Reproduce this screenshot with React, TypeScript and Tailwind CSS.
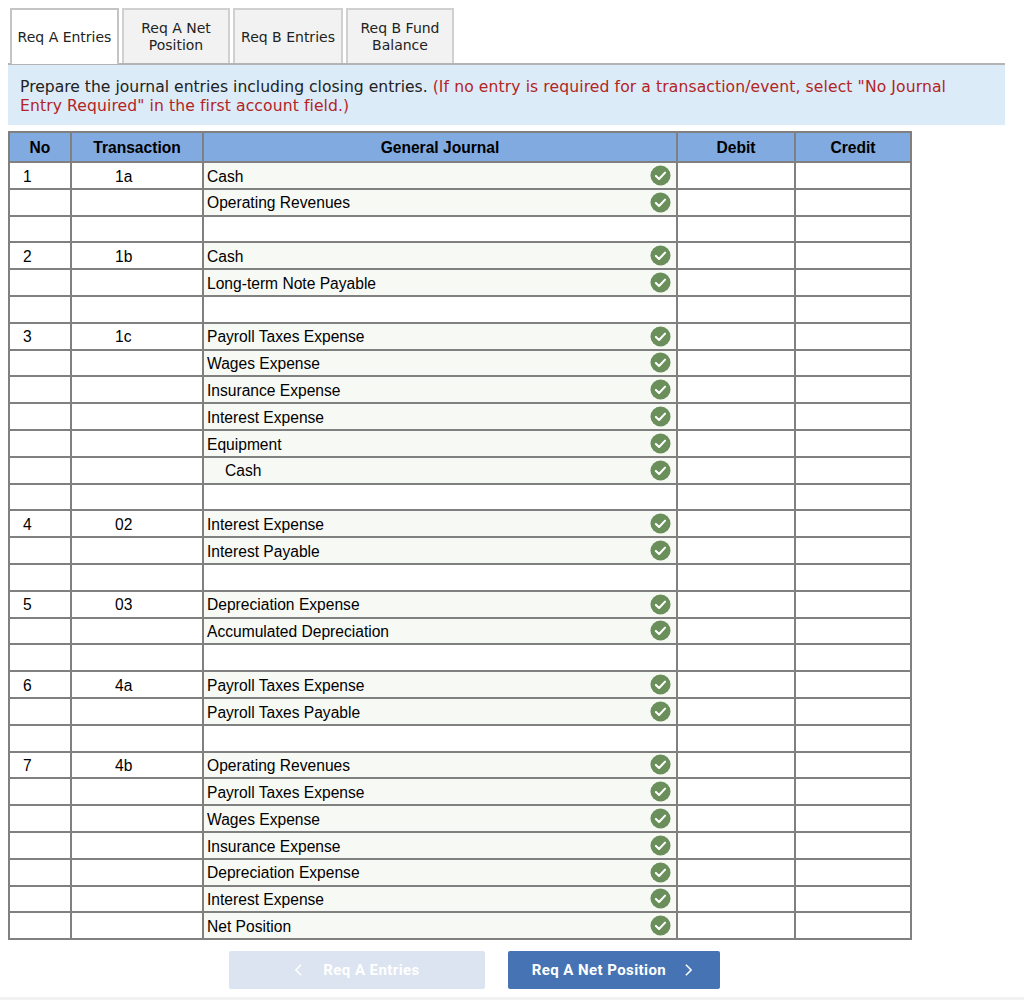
import React from "react";

type Row = { no?: string; tx?: string; acct?: string; indent?: boolean };

const groups: [string, string, string[]][] = [
  ["1", "1a", ["Cash", "Operating Revenues"]],
  ["2", "1b", ["Cash", "Long-term Note Payable"]],
  ["3", "1c", ["Payroll Taxes Expense", "Wages Expense", "Insurance Expense", "Interest Expense", "Equipment", "  Cash"]],
  ["4", "02", ["Interest Expense", "Interest Payable"]],
  ["5", "03", ["Depreciation Expense", "Accumulated Depreciation"]],
  ["6", "4a", ["Payroll Taxes Expense", "Payroll Taxes Payable"]],
  ["7", "4b", ["Operating Revenues", "Payroll Taxes Expense", "Wages Expense", "Insurance Expense", "Depreciation Expense", "Interest Expense", "Net Position"]],
];

const rows: Row[] = [];
groups.forEach(([no, tx, accts], g) => {
  accts.forEach((a, i) => {
    rows.push({
      no: i === 0 ? no : undefined,
      tx: i === 0 ? tx : undefined,
      acct: a.trim(),
      indent: a.startsWith(" "),
    });
  });
  if (g < groups.length - 1) rows.push({});
});

function Check() {
  return (
    <svg viewBox="0 0 22 22" className="h-[21px] w-[21px] shrink-0">
      <circle cx="11" cy="11" r="10.5" fill="#6a8f5b" />
      <path d="M6.2 11.4l3.3 3.2 6.3-6.6" fill="none" stroke="#fff" strokeWidth="2.2" strokeLinecap="round" strokeLinejoin="round" />
    </svg>
  );
}

function Tab({ label, active }: { label: string; active?: boolean }) {
  return (
    <div
      className={
        active
          ? "relative z-10 -mb-[1px] flex h-[56px] items-center justify-center border-2 border-b-0 border-[#c4c4c4] bg-white text-center leading-[17px]"
          : "flex h-[55px] items-center justify-center border-2 border-b-0 border-[#d0d0d0] bg-[#f2f2f2] pt-[1px] text-center leading-[17px]"
      }
    >
      {label}
    </div>
  );
}

const cell = "border-2 border-[#808080] p-0";
const head = "border-2 border-[#808080] bg-[#80aae0] p-0 pt-[2px] text-center align-middle font-bold";

export default function App() {
  return (
    <div className="h-[1008px] w-[1024px] overflow-hidden bg-white text-black">
      <div className="ml-[8px] mr-[19px] pt-[8px] font-['DejaVu_Sans','Verdana',sans-serif] text-[14px] text-[#222]">
        <div className="flex gap-[3px] pl-[2px]">
          <div className="w-[109px]"><Tab label="Req A Entries" active /></div>
          <div className="w-[108px]"><Tab label="Req A Net Position" /></div>
          <div className="w-[110px]"><Tab label="Req B Entries" /></div>
          <div className="w-[108px]"><Tab label="Req B Fund Balance" /></div>
        </div>
        <div className="border-t-2 border-[#b4b4b4] bg-[#dcebf8] pb-[9px] pl-[12px] pr-[40px] pt-[13px] text-[15.6px] leading-[19px]">
          Prepare the journal entries including closing entries.{" "}
          <span className="tracking-[0.1px] text-[#b32424]">
            (If no entry is required for a transaction/event, select "No Journal Entry Required" in the first account field.)
          </span>
        </div>
      </div>

      <table className="ml-[8px] mt-[6px] w-[902px] table-fixed border-collapse border-2 border-[#808080] font-['Liberation_Sans','Arial',sans-serif] text-[15.6px] leading-none">
        <colgroup>
          <col className="w-[62px]" />
          <col className="w-[132px]" />
          <col className="w-[474px]" />
          <col className="w-[118px]" />
          <col className="w-[116px]" />
        </colgroup>
        <thead>
          <tr className="h-[30px]">
            <th className={head}>No</th>
            <th className={head}>Transaction</th>
            <th className={head}>General Journal</th>
            <th className={head}>Debit</th>
            <th className={head}>Credit</th>
          </tr>
        </thead>
        <tbody>
          {rows.map((r, i) => (
            <tr key={i} className="h-[26.8px]">
              <td className={cell + " pl-[13px] pt-[2px]"}>{r.no}</td>
              <td className={cell + " pl-[43px] pt-[2px]"}>{r.tx}</td>
              <td className={cell + (r.acct ? " bg-[#f7f9f5]" : "")}>
                {r.acct && (
                  <div className={"flex items-center justify-between pr-[5px] " + (r.indent ? "pl-[21px]" : "pl-[3px]")}>
                    <span className="pt-[2px]">{r.acct}</span>
                    <Check />
                  </div>
                )}
              </td>
              <td className={cell}></td>
              <td className={cell}></td>
            </tr>
          ))}
        </tbody>
      </table>

      <div className="ml-[229px] mt-[11px] flex gap-[23px] font-['Roboto','Inter',sans-serif] text-[15px] font-bold tracking-[0.42px] text-white">
        <div className="flex h-[38px] w-[256px] items-center justify-center gap-[20px] rounded-[2px] bg-[#dbe4f0]">
          <svg viewBox="0 0 10 16" className="h-[14px] w-[9px]"><path d="M8 2L2 8l6 6" fill="none" stroke="#fff" strokeWidth="1.8" /></svg>
          <span>Req A Entries</span>
        </div>
        <div className="flex h-[38px] w-[212px] items-center justify-center gap-[18px] rounded-[2px] bg-[#4673b3] pr-[3px]">
          <span>Req A Net Position</span>
          <svg viewBox="0 0 10 16" className="h-[14px] w-[9px]"><path d="M2 2l6 6-6 6" fill="none" stroke="#fff" strokeWidth="1.8" /></svg>
        </div>
      </div>
      <div className="mt-[8px] h-[3px] bg-[#f2f2f2]" />
    </div>
  );
}
